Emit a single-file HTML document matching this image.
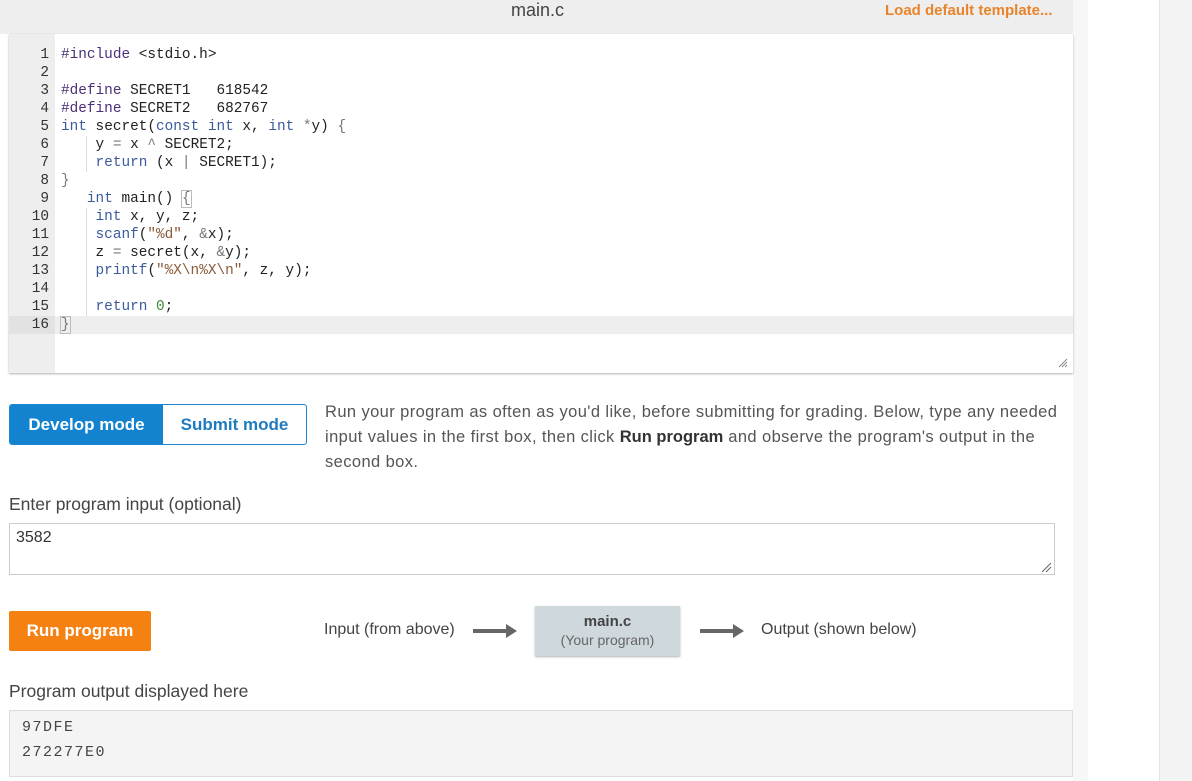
<!DOCTYPE html>
<html><head><meta charset="utf-8"><style>
*{box-sizing:border-box;margin:0;padding:0}
body{width:1192px;height:781px;overflow:hidden;background:#fff;font-family:"Liberation Sans",sans-serif;position:relative;color:#333}
.abs{position:absolute}
.code{font-family:"Liberation Mono",monospace;font-size:14.4px;line-height:18px;white-space:pre;color:#222}
.ln{font-family:"Liberation Mono",monospace;font-size:14.4px;line-height:18px;white-space:pre;color:#333;text-align:right;width:40px}
.kw{color:#3b5b9c}.pp{color:#4b2f7a}.st{color:#8a5a3a}.nm{color:#3d8a3d}.op{color:#777}
.guide{position:absolute;width:1px;background:#ddd}
</style></head><body>
<div class="abs" style="left:0;top:0;width:1073px;height:34px;background:#eeeeee"></div>
<div class="abs" style="left:511px;top:0;font-size:18px;color:#444">main.c</div>
<div class="abs" style="left:885px;top:2px;font-size:15px;font-weight:bold;color:#e8842a">Load default template...</div>
<div class="abs" style="left:1073px;top:0;width:15px;height:781px;background:#f7f7f7"></div>
<div class="abs" style="left:1159px;top:0;width:33px;height:781px;background:#f3f3f3;border-left:1px solid #e4e4e4"></div>
<div class="abs" style="left:9px;top:34px;width:1064px;height:339px;background:#fff;box-shadow:0 1px 2px rgba(0,0,0,.3)"></div>
<div class="abs" style="left:9px;top:34px;width:46px;height:339px;background:#eeeeee"></div>
<div class="abs" style="left:55px;top:316px;width:1018px;height:18px;background:#eeeeee"></div>
<div class="abs" style="left:9px;top:316px;width:46px;height:18px;background:#e2e2e2"></div>
<div class="abs ln" style="left:9px;top:46px">1
2
3
4
5
6
7
8
9
10
11
12
13
14
15
16</div>
<div class="guide" style="left:86px;top:136px;height:36px"></div>
<div class="guide" style="left:86px;top:208px;height:108px"></div>
<div class="abs code" style="left:61px;top:46px"><span class="pp">#include</span> &lt;stdio.h&gt;

<span class="pp">#define</span> SECRET1   618542
<span class="pp">#define</span> SECRET2   682767
<span class="kw">int</span> secret(<span class="kw">const</span> <span class="kw">int</span> x, <span class="kw">int</span> <span class="op">*</span>y) <span class="op">{</span>
    y <span class="op">=</span> x <span class="op">^</span> SECRET2;
    <span class="kw">return</span> (x <span class="op">|</span> SECRET1);
<span class="op">}</span>
   <span class="kw">int</span> main() <span style="outline:1px solid #bbb" class="op">{</span>
    <span class="kw">int</span> x, y, z;
    <span class="kw">scanf</span>(<span class="st">"%d"</span>, <span class="op">&amp;</span>x);
    z <span class="op">=</span> secret(x, <span class="op">&amp;</span>y);
    <span class="kw">printf</span>(<span class="st">"%X\n%X\n"</span>, z, y);

    <span class="kw">return</span> <span class="nm">0</span>;
<span style="outline:1px solid #bbb" class="op">}</span></div>
<svg class="abs" style="left:1058px;top:358px" width="10" height="10"><path d="M9 1L1 9M9 4L4 9M9 7L7 9" stroke="#888" stroke-width="1"/></svg>
<div class="abs" style="left:9px;top:404px;width:298px;height:41px;border:1px solid #1e85d0;border-radius:3px;overflow:hidden;display:flex">
<div style="width:153px;background:#1383cf;color:#fff;font-weight:bold;font-size:17px;line-height:39px;text-align:center">Develop mode</div>
<div style="flex:1;color:#1e7bc0;font-weight:bold;font-size:17px;line-height:39px;text-align:center">Submit mode</div></div>
<div class="abs" style="left:325px;top:400px;width:760px;font-size:16.5px;letter-spacing:0.4px;line-height:25px;color:#555;white-space:nowrap">Run your program as often as you'd like, before submitting for grading. Below, type any needed<br>input values in the first box, then click <b style="color:#333;letter-spacing:0">Run program</b> and observe the program's output in the<br>second box.</div>
<div class="abs" style="left:9px;top:494px;font-size:17.5px;color:#444">Enter program input (optional)</div>
<div class="abs" style="left:9px;top:523px;width:1046px;height:52px;border:1px solid #ccc;padding:5px 6px;font-size:16px;color:#333">3582</div>
<svg class="abs" style="left:1040px;top:561px" width="12" height="12"><path d="M11 2L2 11M11 6L6 11" stroke="#666" stroke-width="1"/></svg>
<div class="abs" style="left:9px;top:611px;width:142px;height:40px;background:#f48111;border-radius:2px;color:#fff;font-weight:bold;font-size:17px;line-height:40px;text-align:center">Run program</div>
<div class="abs" style="left:324px;top:621px;font-size:16px;color:#444">Input (from above)</div>
<svg class="abs" style="left:473px;top:623px" width="45" height="16"><rect x="0" y="6" width="34" height="4" fill="#666"/><path d="M33 1L44 8L33 15Z" fill="#666"/></svg>
<div class="abs" style="left:535px;top:606px;width:145px;height:50px;background:#cfd8dd;box-shadow:0 1px 2px rgba(0,0,0,.3);text-align:center">
<div style="font-size:15px;font-weight:bold;color:#444;margin-top:7px">main.c</div>
<div style="font-size:14px;color:#666;margin-top:2px">(Your program)</div></div>
<svg class="abs" style="left:700px;top:623px" width="45" height="16"><rect x="0" y="6" width="34" height="4" fill="#666"/><path d="M33 1L44 8L33 15Z" fill="#666"/></svg>
<div class="abs" style="left:761px;top:621px;font-size:16px;color:#444">Output (shown below)</div>
<div class="abs" style="left:9px;top:681px;font-size:17.5px;color:#444">Program output displayed here</div>
<div class="abs" style="left:9px;top:710px;width:1064px;height:67px;background:#f4f4f4;border:1px solid #ddd;padding:4px 12px;font-family:'Liberation Mono',monospace;font-size:15px;letter-spacing:1.5px;line-height:25px;color:#444;white-space:pre">97DFE
272277E0</div>
</body></html>
